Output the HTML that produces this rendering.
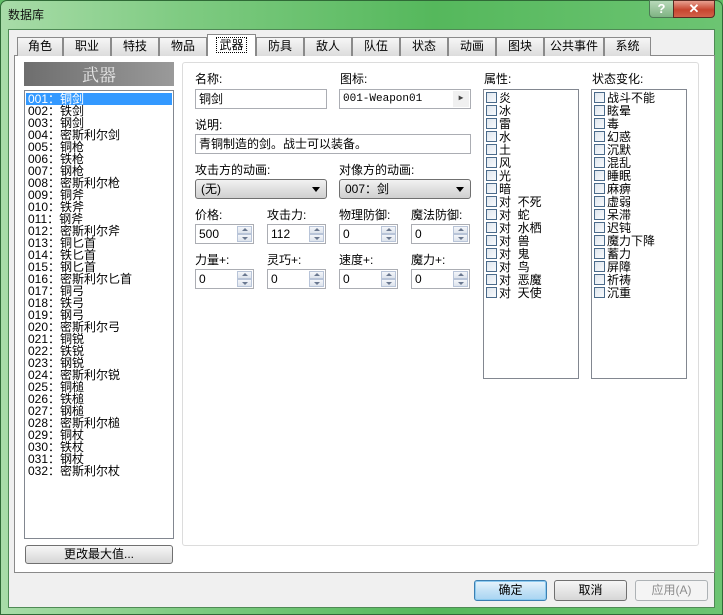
<!DOCTYPE html>
<html><head><meta charset="utf-8">
<style>
*{box-sizing:border-box;margin:0;padding:0}
body{width:723px;height:615px;position:relative;overflow:hidden;background:#5fbf66;font-family:"Liberation Sans","Noto Sans CJK SC","WenQuanYi Zen Hei",sans-serif;font-size:12px;color:#000}
.a{position:absolute}
#frame{left:0;top:0;width:723px;height:615px;border-radius:7px 7px 0 0;background:linear-gradient(90deg,#a8dca8 0,#7fcb82 25%,#55b85c 60%,#6cc472 100%);border:1px solid #2f6a36}
#title{left:8px;top:6px;font-size:12px;color:#111}
#client{left:8px;top:29px;width:707px;height:579px;background:#f0f0f0;border:1px solid #4f8a55}
.tab{position:absolute;top:37px;height:19px;border:1px solid #8a8a8a;border-bottom:none;background:linear-gradient(#f6f6f6,#dcdcdc);text-align:center;line-height:17px;font-size:12px}
.tab.sel{top:34px;height:22px;background:#fff;z-index:3;line-height:20px}
#panel{left:14px;top:55px;width:701px;height:518px;background:#fff;border:1px solid #8a8a8a}
#grp{left:182px;top:62px;width:517px;height:484px;border:1px solid #dcdcdc;border-radius:3px;background:#fff}
#hdr{left:24px;top:62px;width:150px;height:24px;background:linear-gradient(90deg,#6e6e6e,#9a9a9a);color:#e8e8e8;font-size:17px;text-align:center;line-height:24px;font-family:"Noto Serif CJK SC","Liberation Serif",serif}
#list{left:24px;top:90px;width:150px;height:449px;border:1px solid #828790;background:#fff;padding:2px 1px}
.li{height:12px;line-height:12px;font-size:12px;padding-left:2px;white-space:nowrap;overflow:visible}
.li.s{background:#3399ff;color:#fff}
.lbl{position:absolute;font-size:12px;line-height:14px}
.inp{position:absolute;height:20px;border:1px solid #abadb3;background:#fff;padding-left:3px;line-height:18px;font-size:12px}
.sel2{position:absolute;height:20px;border:1px solid #707070;border-radius:3px;background:linear-gradient(#f2f2f2,#e0e0e0 50%,#d0d0d0);padding-left:5px;line-height:18px}
.sel2:after{content:"";position:absolute;right:6px;top:7px;border-left:4px solid transparent;border-right:4px solid transparent;border-top:5px solid #000}
.sp{position:absolute;width:59px;height:20px;border:1px solid #abadb3;background:#fff;padding-left:3px;line-height:18px}
.sp i{position:absolute;right:1px;width:15px;height:8px;border:1px solid #b8c4d8;background:linear-gradient(#f4f6fa,#dde3ec)}
.sp i.u{top:1px}.sp i.d{top:9px}
.sp i:after{content:"";position:absolute;left:4px;border-left:3px solid transparent;border-right:3px solid transparent}
.sp i.u:after{top:1px;border-bottom:3px solid #6a7890}
.sp i.d:after{top:2px;border-top:3px solid #6a7890}
.cl{position:absolute;width:96px;height:290px;border:1px solid #828790;background:#fff;padding:2px 2px}
.ci{height:13px;line-height:13px;white-space:nowrap;font-size:12px}
.ci b{display:inline-block;width:11px;height:11px;border:1px solid #4a6a8a;background:linear-gradient(135deg,#dfe6ee,#f8fafc);vertical-align:-1px;margin-right:2px}
.btn{position:absolute;height:21px;border:1px solid #707070;border-radius:3px;background:linear-gradient(#f6f6f6,#e6e6e6 50%,#d6d6d6);text-align:center;line-height:19px;font-size:12px}
</style></head><body>
<div id="frame" class="a"></div>
<div id="title" class="a">数据库</div>
<div class="a" style="left:649px;top:0;width:25px;height:18px;border:1px solid #4d7a55;border-radius:0 0 0 4px;background:linear-gradient(#b7d9b9,#7fb383);color:#fff;text-align:center;font-weight:bold;font-size:13px;line-height:16px">?</div>
<div class="a" style="left:673px;top:0;width:42px;height:18px;border:1px solid #5a2a22;border-radius:0 0 4px 0;background:linear-gradient(#e8a090,#c7452f 55%,#d2624a);color:#fff;text-align:center;font-weight:bold;font-size:13px;line-height:16px">✕</div>
<div id="client" class="a"></div>
<div id="panel" class="a"></div>
<div class="tab" style="left:17px;width:46px">角色</div>
<div class="tab" style="left:63px;width:48px">职业</div>
<div class="tab" style="left:111px;width:48px">特技</div>
<div class="tab" style="left:159px;width:48px">物品</div>
<div class="tab sel" style="left:207px;width:49px"><span style="border:1px dotted #000;padding:0 2px">武器</span></div>
<div class="tab" style="left:256px;width:48px">防具</div>
<div class="tab" style="left:304px;width:48px">敌人</div>
<div class="tab" style="left:352px;width:48px">队伍</div>
<div class="tab" style="left:400px;width:48px">状态</div>
<div class="tab" style="left:448px;width:48px">动画</div>
<div class="tab" style="left:496px;width:48px">图块</div>
<div class="tab" style="left:544px;width:60px">公共事件</div>
<div class="tab" style="left:604px;width:47px">系统</div>
<div id="grp" class="a"></div>
<div id="hdr" class="a">武器</div>
<div id="list" class="a">
<div class="li s">001：铜剑</div><div class="li">002：铁剑</div><div class="li">003：钢剑</div><div class="li">004：密斯利尔剑</div><div class="li">005：铜枪</div><div class="li">006：铁枪</div><div class="li">007：钢枪</div><div class="li">008：密斯利尔枪</div><div class="li">009：铜斧</div><div class="li">010：铁斧</div><div class="li">011：钢斧</div><div class="li">012：密斯利尔斧</div><div class="li">013：铜匕首</div><div class="li">014：铁匕首</div><div class="li">015：钢匕首</div><div class="li">016：密斯利尔匕首</div><div class="li">017：铜弓</div><div class="li">018：铁弓</div><div class="li">019：钢弓</div><div class="li">020：密斯利尔弓</div><div class="li">021：铜锐</div><div class="li">022：铁锐</div><div class="li">023：钢锐</div><div class="li">024：密斯利尔锐</div><div class="li">025：铜槌</div><div class="li">026：铁槌</div><div class="li">027：钢槌</div><div class="li">028：密斯利尔槌</div><div class="li">029：铜杖</div><div class="li">030：铁杖</div><div class="li">031：钢杖</div><div class="li">032：密斯利尔杖</div>
</div>
<div class="btn" style="left:25px;top:545px;width:148px;height:19px;line-height:17px">更改最大值...</div>

<div class="lbl" style="left:195px;top:72px">名称:</div>
<div class="inp" style="left:195px;top:89px;width:132px">铜剑</div>
<div class="lbl" style="left:340px;top:72px">图标:</div>
<div class="inp" style="left:339px;top:89px;width:132px;font-family:'Liberation Mono',monospace;font-size:11px">001-Weapon01<span style="position:absolute;right:1px;top:1px;width:16px;height:16px;background:#f0f0f0;font-size:8px;text-align:center;line-height:16px;color:#444">▶</span></div>
<div class="lbl" style="left:195px;top:118px">说明:</div>
<div class="inp" style="left:195px;top:134px;width:276px">青铜制造的剑。战士可以装备。</div>
<div class="lbl" style="left:195px;top:163px">攻击方的动画:</div>
<div class="sel2" style="left:195px;top:179px;width:132px">(无)</div>
<div class="lbl" style="left:339px;top:163px">对像方的动画:</div>
<div class="sel2" style="left:339px;top:179px;width:132px">007：剑</div>

<div class="lbl" style="left:195px;top:208px">价格:</div>
<div class="lbl" style="left:267px;top:208px">攻击力:</div>
<div class="lbl" style="left:339px;top:208px">物理防御:</div>
<div class="lbl" style="left:411px;top:208px">魔法防御:</div>
<div class="sp" style="left:195px;top:224px">500<i class="u"></i><i class="d"></i></div>
<div class="sp" style="left:267px;top:224px">112<i class="u"></i><i class="d"></i></div>
<div class="sp" style="left:339px;top:224px">0<i class="u"></i><i class="d"></i></div>
<div class="sp" style="left:411px;top:224px">0<i class="u"></i><i class="d"></i></div>
<div class="lbl" style="left:195px;top:253px">力量+:</div>
<div class="lbl" style="left:267px;top:253px">灵巧+:</div>
<div class="lbl" style="left:339px;top:253px">速度+:</div>
<div class="lbl" style="left:411px;top:253px">魔力+:</div>
<div class="sp" style="left:195px;top:269px">0<i class="u"></i><i class="d"></i></div>
<div class="sp" style="left:267px;top:269px">0<i class="u"></i><i class="d"></i></div>
<div class="sp" style="left:339px;top:269px">0<i class="u"></i><i class="d"></i></div>
<div class="sp" style="left:411px;top:269px">0<i class="u"></i><i class="d"></i></div>

<div class="lbl" style="left:484px;top:72px">属性:</div>
<div class="cl" style="left:483px;top:89px">
<div class="ci"><b></b>炎</div><div class="ci"><b></b>冰</div><div class="ci"><b></b>雷</div><div class="ci"><b></b>水</div><div class="ci"><b></b>土</div><div class="ci"><b></b>风</div><div class="ci"><b></b>光</div><div class="ci"><b></b>暗</div><div class="ci"><b></b>对&nbsp;&nbsp;不死</div><div class="ci"><b></b>对&nbsp;&nbsp;蛇</div><div class="ci"><b></b>对&nbsp;&nbsp;水栖</div><div class="ci"><b></b>对&nbsp;&nbsp;兽</div><div class="ci"><b></b>对&nbsp;&nbsp;鬼</div><div class="ci"><b></b>对&nbsp;&nbsp;鸟</div><div class="ci"><b></b>对&nbsp;&nbsp;恶魔</div><div class="ci"><b></b>对&nbsp;&nbsp;天使</div>
</div>
<div class="lbl" style="left:592px;top:72px">状态变化:</div>
<div class="cl" style="left:591px;top:89px">
<div class="ci"><b></b>战斗不能</div><div class="ci"><b></b>眩晕</div><div class="ci"><b></b>毒</div><div class="ci"><b></b>幻惑</div><div class="ci"><b></b>沉默</div><div class="ci"><b></b>混乱</div><div class="ci"><b></b>睡眠</div><div class="ci"><b></b>麻痹</div><div class="ci"><b></b>虚弱</div><div class="ci"><b></b>呆滞</div><div class="ci"><b></b>迟钝</div><div class="ci"><b></b>魔力下降</div><div class="ci"><b></b>蓄力</div><div class="ci"><b></b>屏障</div><div class="ci"><b></b>祈祷</div><div class="ci"><b></b>沉重</div>
</div>

<div class="btn" style="left:474px;top:580px;width:73px;border-color:#3c7fb1;background:linear-gradient(#e8f4fc,#c4e2f6 50%,#a8d4f2);box-shadow:0 0 0 1px #8ccaf0 inset">确定</div>
<div class="btn" style="left:554px;top:580px;width:73px">取消</div>
<div class="btn" style="left:635px;top:580px;width:73px;border-color:#adb2b5;background:#f4f4f4;color:#8d8d8d">应用(A)</div>
</body></html>
